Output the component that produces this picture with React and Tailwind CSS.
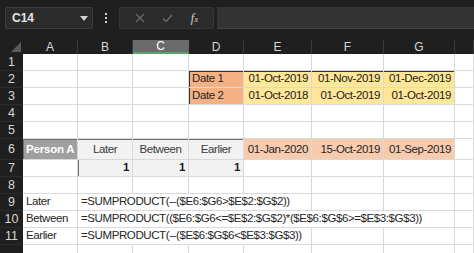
import React from "react";

const F = { fontFamily: '"Liberation Sans", Arial, sans-serif' };

const cols = ["A", "B", "C", "D", "E", "F", "G", ""];
const rowH = [17, 17, 17, 17, 17, 21, 17, 17, 17, 17, 17, 17];

function Cell({ className = "", children }) {
  return (
    <div className={"bg-white border-r border-b border-[#d9d9d9] flex items-end pb-[3px] overflow-visible whitespace-nowrap text-[11.5px] tracking-[-0.4px] leading-none " + className}>
      {children}
    </div>
  );
}

export default function App() {
  const rows = [];
  const content = {};
  const dark = "border-[#303030]";
  content["D2"] = <Cell className={`!bg-[#f4b183] ${dark} shadow-[inset_1px_1px_0_#303030] px-[3px] text-[#262626]`}>Date 1</Cell>;
  content["D3"] = <Cell className={`!bg-[#f4b183] ${dark} shadow-[inset_1px_0_0_#303030] px-[3px] text-[#262626]`}>Date 2</Cell>;
  const yE = `!bg-[#ffe699] ${dark} justify-end pr-[3px] text-[#1a1a1a]`;
  content["E2"] = <Cell className={`${yE} shadow-[inset_0_1px_0_#303030]`}>01-Oct-2019</Cell>;
  content["F2"] = <Cell className={`${yE} shadow-[inset_0_1px_0_#303030]`}>01-Nov-2019</Cell>;
  content["G2"] = <Cell className={`${yE} shadow-[inset_0_1px_0_#303030]`}>01-Dec-2019</Cell>;
  content["E3"] = <Cell className={yE}>01-Oct-2018</Cell>;
  content["F3"] = <Cell className={yE}>01-Oct-2019</Cell>;
  content["G3"] = <Cell className={yE}>01-Oct-2019</Cell>;
  content["A6"] = <Cell className="!bg-[#a0a0a0] border-[#6f6f6f] shadow-[inset_1px_1px_0_#6f6f6f] px-[3px] !pb-[4px] text-white font-bold !tracking-[-0.2px]">Person A</Cell>;
  const hdr = "!bg-[#f2f2f2] border-[#6f6f6f] justify-center !pb-[4px] text-[#3a3a3a] shadow-[inset_0_1px_0_#6f6f6f]";
  content["B6"] = <Cell className={hdr}>Later</Cell>;
  content["C6"] = <Cell className={hdr}>Between</Cell>;
  content["D6"] = <Cell className={hdr}>Earlier</Cell>;
  const or = "!bg-[#f8cbad] border-[#c9a488] justify-end !pb-[4px] pr-[3px] text-[#262626]";
  content["E6"] = <Cell className={or}>01-Jan-2020</Cell>;
  content["F6"] = <Cell className={or}>15-Oct-2019</Cell>;
  content["G6"] = <Cell className={or}>01-Sep-2019</Cell>;
  const one = "!bg-[#f2f2f2] border-[#6f6f6f] justify-end pr-[3px] text-[#1a1a1a] font-bold";
  content["B7"] = <Cell className={one + " shadow-[inset_1px_0_0_#6f6f6f]"}>1</Cell>;
  content["C7"] = <Cell className={one}>1</Cell>;
  content["D7"] = <Cell className={one}>1</Cell>;
  content["A9"] = <Cell className="px-[3px] text-[#262626]">Later</Cell>;
  content["A10"] = <Cell className="px-[3px] text-[#262626]">Between</Cell>;
  content["A11"] = <Cell className="px-[3px] text-[#262626]">Earlier</Cell>;
  const fml = "px-[3px] text-[#262626] border-r-transparent relative z-10";
  content["B9"] = <Cell className={fml}>=SUMPRODUCT(--($E6:$G6&gt;$E$2:$G$2))</Cell>;
  content["B10"] = <Cell className={fml}>=SUMPRODUCT(($E6:$G6&lt;=$E$2:$G$2)*($E$6:$G$6&gt;=$E$3:$G$3))</Cell>;
  content["B11"] = <Cell className={fml}>=SUMPRODUCT(--($E$6:$G$6&lt;$E$3:$G$3))</Cell>;

  for (let r = 1; r <= 12; r++) {
    rows.push(
      <div key={"h" + r} className="bg-[#1f1f1f] border-b border-[#2c2c2c] flex items-center justify-center text-[12.5px] text-[#d6d6d6]">
        {r < 12 ? r : null}
      </div>
    );
    cols.forEach((c, i) => {
      const k = c + r;
      if (content[k]) rows.push(React.cloneElement(content[k], { key: k }));
      else {
        const hideR = (r === 9 && i >= 1 && i <= 3) || (r === 10 && i >= 1 && i <= 5) || (r === 11 && i >= 1 && i <= 3);
        rows.push(<Cell key={k} className={hideR ? "border-r-transparent" : ""} />);
      }
    });
  }

  return (
    <div style={F} className="w-[474px] h-[253px] overflow-hidden bg-[#1f1f1f]">
      <div className="h-[40px] flex items-start pt-[7px] pl-[5px]">
        <div className="w-[88px] h-[22px] bg-[#2b2b2b] border border-[#3d3d3d] rounded-[2px] flex items-center justify-between pl-[6px] pr-[4px]">
          <span className="text-[12px] text-[#e6e6e6] font-bold">C14</span>
          <svg width="8" height="5" viewBox="0 0 8 5"><path d="M0 0h8L4 5z" fill="#d0d0d0" /></svg>
        </div>
        <div className="w-[26px] h-[22px] flex flex-col items-center justify-center gap-[2px]">
          <span className="w-[2px] h-[2px] bg-[#d0d0d0]" />
          <span className="w-[2px] h-[2px] bg-[#d0d0d0]" />
          <span className="w-[2px] h-[2px] bg-[#d0d0d0]" />
        </div>
        <div className="w-[95px] h-[22px] bg-[#2b2b2b] border border-[#363636] rounded-[2px] flex items-center justify-around px-[6px]">
          <svg width="10" height="10" viewBox="0 0 10 10"><path d="M1 1L9 9M9 1L1 9" stroke="#6a6a6a" strokeWidth="1.3" /></svg>
          <svg width="11" height="9" viewBox="0 0 11 9"><path d="M1 4.5L4 7.5L10 1" stroke="#6a6a6a" strokeWidth="1.5" fill="none" /></svg>
          <span className="text-[12px] italic text-[#d6d6d6]" style={{ fontFamily: '"Liberation Serif", serif' }}>f<span className="text-[9px]">x</span></span>
        </div>
        <div className="ml-[3px] flex-1 h-[22px] bg-[#333333] border-b border-[#444]" />
      </div>
      <div
        className="grid"
        style={{ gridTemplateColumns: "23px 55px 55px 56px 55px 68px 72px 71px 1fr", gridTemplateRows: "14px " + rowH.map((h) => h + "px").join(" ") }}
      >
        <div className="bg-[#1f1f1f] relative">
          <svg className="absolute right-[2px] bottom-[2px]" width="10" height="10" viewBox="0 0 10 10"><path d="M10 0V10H0z" fill="#5a5a5a" /></svg>
        </div>
        {cols.map((c, i) => (
          <div
            key={"c" + i}
            className={
              "flex items-center justify-center text-[12px] border-r " +
              (c === "C" ? "bg-[#6b6b6b] text-white border-[#6b6b6b] border-b-2 border-b-[#5aa06e]" : "bg-[#1f1f1f] text-[#d6d6d6] border-[#3a3a3a]")
            }
          >
            {c}
          </div>
        ))}
        {rows}
      </div>
    </div>
  );
}
